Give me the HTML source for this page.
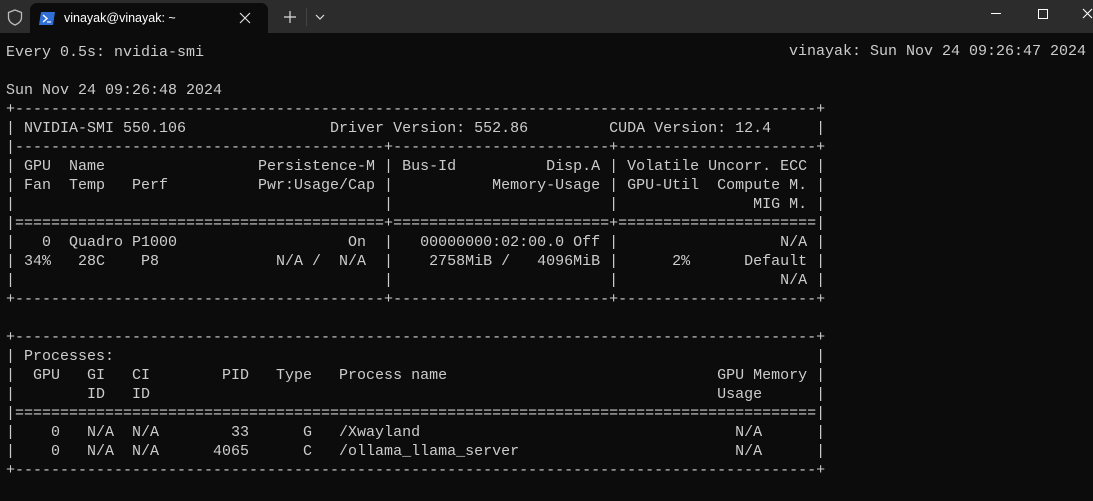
<!DOCTYPE html>
<html><head><meta charset="utf-8"><style>
body{margin:0;width:1093px;height:501px;background:#0c0c0c;overflow:hidden;position:relative;font-family:"Liberation Sans",sans-serif}
.bar{position:absolute;left:0;top:0;width:1093px;height:33px;background:#2c2c2c}
.tab{position:absolute;left:30px;top:3px;width:238px;height:30px;background:#0c0c0c;border-radius:7px 7px 0 0}
.tt{position:absolute;left:64px;top:11px;color:#fff;font-size:12.5px}
pre{position:absolute;left:6px;top:43px;margin:0;font-family:"Liberation Mono",monospace;font-size:15px;line-height:19px;color:#cccccc}
</style></head><body>
<div class="bar">
<svg style="position:absolute;left:7px;top:9px" width="16" height="17" viewBox="0 0 16 17"><path d="M8 1 L14.5 3.5 V8.5 C14.5 12 11.5 14.5 8 16 C4.5 14.5 1.5 12 1.5 8.5 V3.5 Z" fill="none" stroke="#bbb" stroke-width="1.3"/></svg>
<div class="tab">
<svg style="position:absolute;left:9px;top:9px" width="16" height="13" viewBox="0 0 16 13"><path d="M2 0 H16 L14 13 H0 Z" fill="#2f6fd6"/><path d="M4 3 L8 6.5 L4 10" stroke="#fff" stroke-width="1.4" fill="none"/><path d="M8 10 H12" stroke="#fff" stroke-width="1.2"/></svg>
<div class="tt" style="left:34px;top:8px">vinayak@vinayak: ~</div>
<svg style="position:absolute;left:209px;top:9px" width="12" height="12"><path d="M1 1 L11 11 M11 1 L1 11" stroke="#ddd" stroke-width="1.2"/></svg>
</div>
<svg style="position:absolute;left:284px;top:11px" width="12" height="12"><path d="M6 0 V12 M0 6 H12" stroke="#ddd" stroke-width="1.2"/></svg>
<div style="position:absolute;left:306px;top:8px;width:1px;height:18px;background:#444"></div>
<svg style="position:absolute;left:315px;top:14px" width="10" height="6"><path d="M1 1 L5 5 L9 1" stroke="#ddd" stroke-width="1.2" fill="none"/></svg>
<div style="position:absolute;left:991px;top:13px;width:10px;height:1px;background:#fff"></div>
<div style="position:absolute;left:1038px;top:9px;width:8px;height:8px;border:1px solid #fff"></div>
<svg style="position:absolute;left:1082px;top:8px" width="11" height="11"><path d="M1 1 L10 10 M10 1 L1 10" stroke="#fff" stroke-width="1.1"/></svg>
</div>
<pre>Every 0.5s: nvidia-smi

Sun Nov 24 09:26:48 2024
+-----------------------------------------------------------------------------------------+
| NVIDIA-SMI 550.106                Driver Version: 552.86         CUDA Version: 12.4     |
|-----------------------------------------+------------------------+----------------------+
| GPU  Name                 Persistence-M | Bus-Id          Disp.A | Volatile Uncorr. ECC |
| Fan  Temp   Perf          Pwr:Usage/Cap |           Memory-Usage | GPU-Util  Compute M. |
|                                         |                        |               MIG M. |
|=========================================+========================+======================|
|   0  Quadro P1000                   On  |   00000000:02:00.0 Off |                  N/A |
| 34%   28C    P8             N/A /  N/A  |    2758MiB /   4096MiB |      2%      Default |
|                                         |                        |                  N/A |
+-----------------------------------------+------------------------+----------------------+

+-----------------------------------------------------------------------------------------+
| Processes:                                                                              |
|  GPU   GI   CI        PID   Type   Process name                              GPU Memory |
|        ID   ID                                                               Usage      |
|=========================================================================================|
|    0   N/A  N/A        33      G   /Xwayland                                   N/A      |
|    0   N/A  N/A      4065      C   /ollama_llama_server                        N/A      |
+-----------------------------------------------------------------------------------------+</pre>
<pre style="left:789px;top:42px">vinayak: Sun Nov 24 09:26:47 2024</pre>
</body></html>
